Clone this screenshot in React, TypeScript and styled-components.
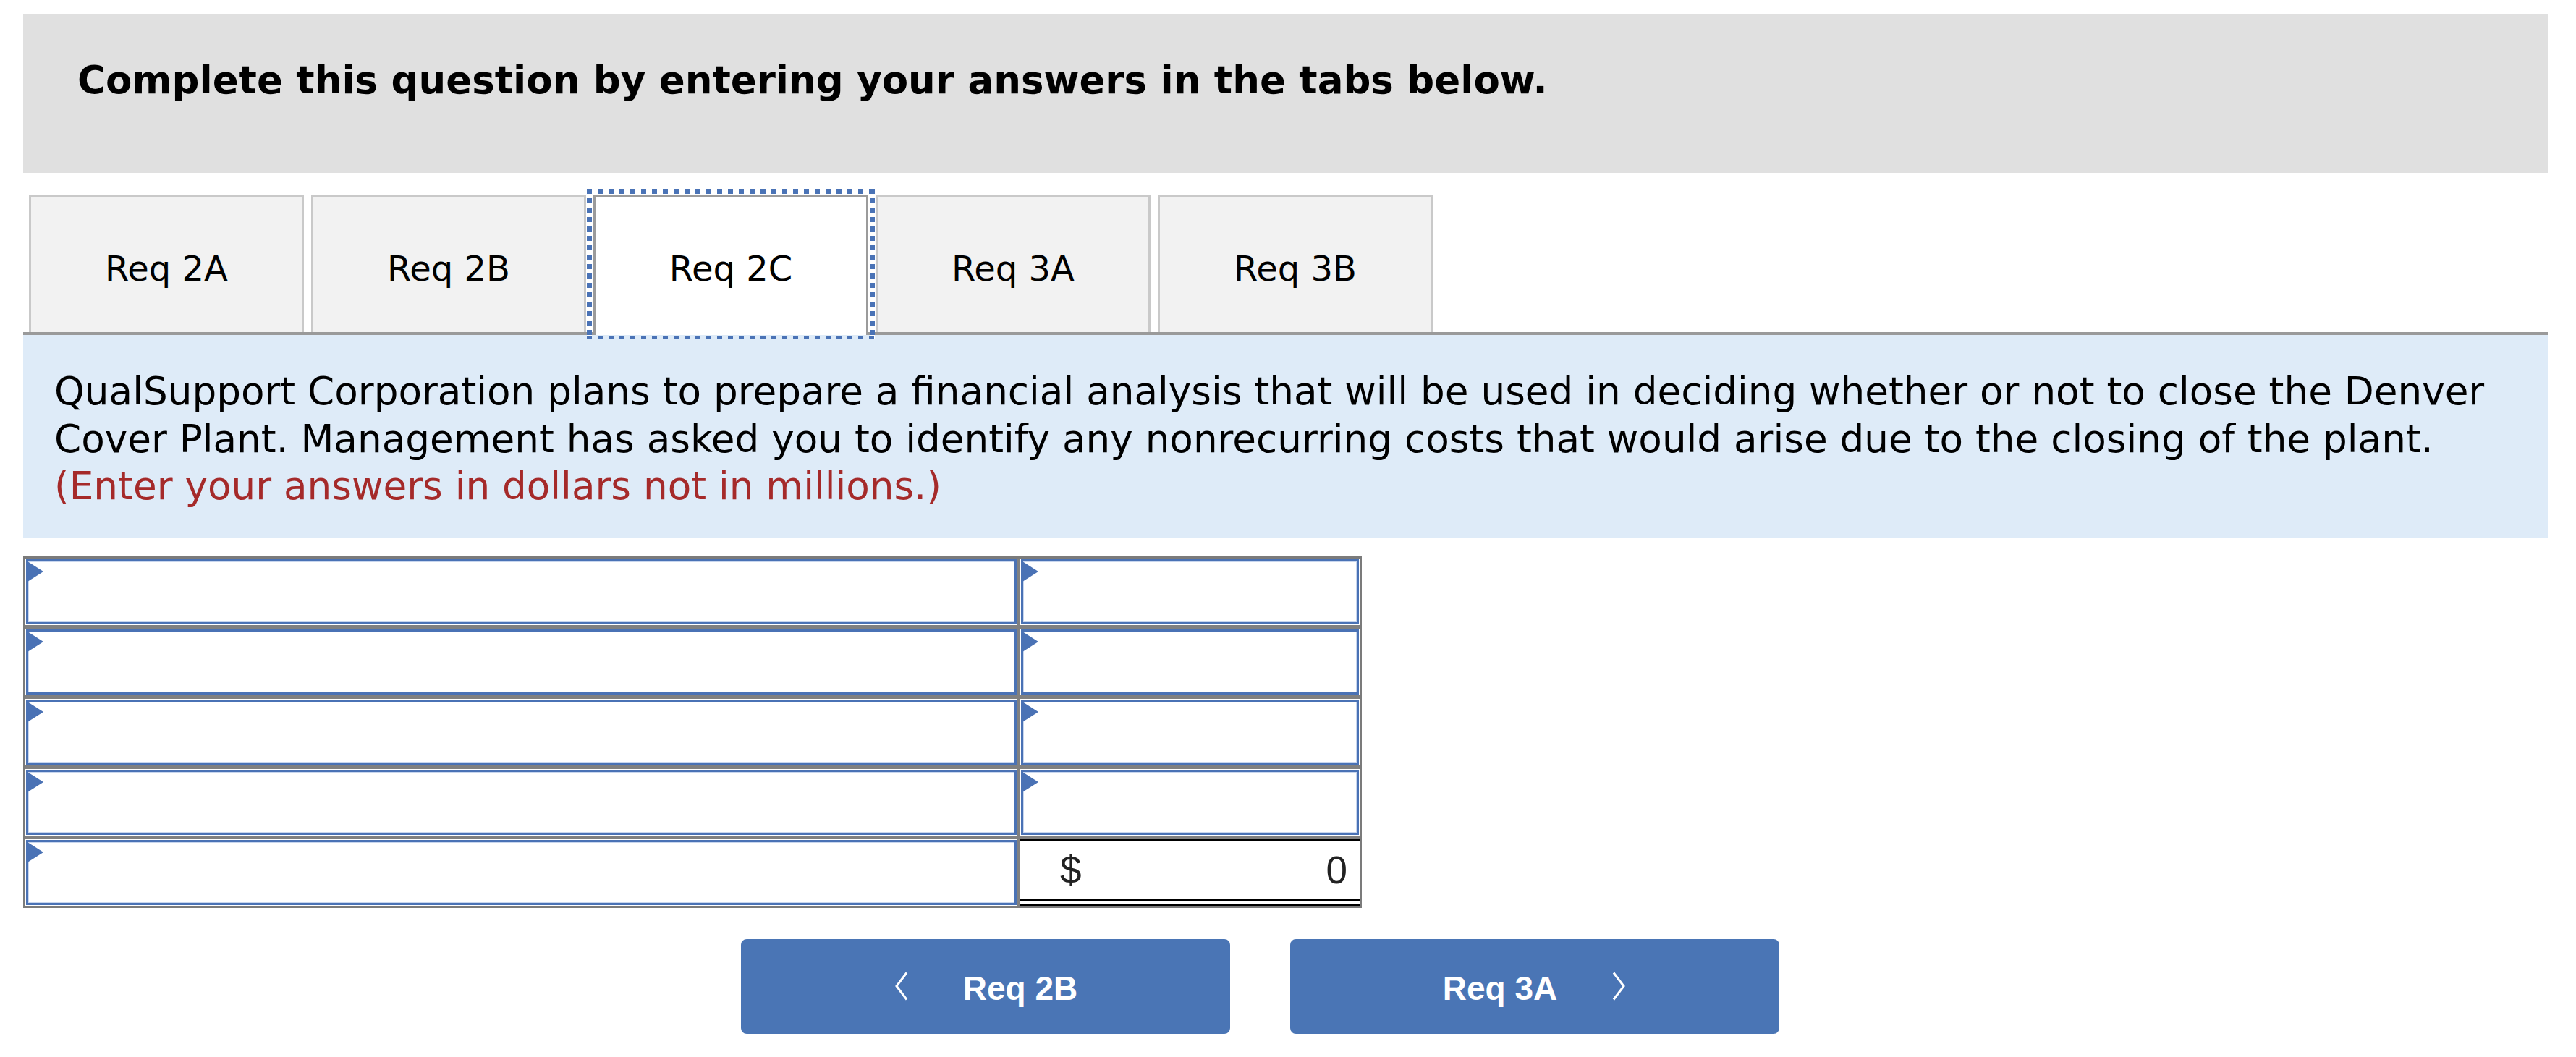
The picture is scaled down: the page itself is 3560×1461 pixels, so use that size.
import React from "react";
import styled, { createGlobalStyle } from "styled-components";

const GlobalStyle = createGlobalStyle`
  html, body { margin: 0; padding: 0; background: #ffffff; }
  body { font-family: "DejaVu Sans", Verdana, sans-serif; color: #000000; }
  * { box-sizing: border-box; }
`;

const Page = styled.div`
  width: 3560px;
  padding: 19px 39px 32px 32px;
`;

const Header = styled.div`
  height: 220px;
  background: #e0e0e0;
  padding: 61px 0 0 75px;
  font-size: 53px;
  font-weight: 700;
  line-height: normal;
`;

const TabRow = styled.div`
  margin-top: 30px;
  height: 194px;
  display: flex;
  align-items: flex-start;
  gap: 10px;
  padding-left: 8px;
  border-bottom: 4px solid #9a9a9a;
`;

const Tab = styled.button<{ $active?: boolean }>`
  position: relative;
  width: 380px;
  height: ${(p) => (p.$active ? "194px" : "190px")};
  margin: 0;
  padding: ${(p) => (p.$active ? "6px 0 0" : "10px 0 0")};
  border: 3px solid ${(p) => (p.$active ? "#9b9b9b" : "#c9c9c9")};
  border-bottom: none;
  background: ${(p) => (p.$active ? "#ffffff" : "#f2f2f2")};
  font-family: "DejaVu Sans", Verdana, sans-serif;
  font-size: 48px;
  line-height: normal;
  color: #000;
  text-align: center;
  cursor: pointer;
  z-index: ${(p) => (p.$active ? 2 : 0)};

  ${(p) =>
    p.$active &&
    `
    &::after {
      content: "";
      position: absolute;
      left: -12px;
      right: -12px;
      top: -11px;
      bottom: -6px;
      pointer-events: none;
      background:
        repeating-linear-gradient(90deg, #4a73b6 0 7px, transparent 7px 15px) left top / 100% 7px no-repeat,
        repeating-linear-gradient(90deg, #4a73b6 0 7px, transparent 7px 15px) left bottom / 100% 5px no-repeat,
        repeating-linear-gradient(180deg, #4a73b6 0 7px, #ffffff 7px 13px) left top / 7px 100% no-repeat,
        repeating-linear-gradient(180deg, #4a73b6 0 7px, #ffffff 7px 13px) right top / 7px 100% no-repeat;
    }
  `}
`;

const Panel = styled.div`
  background: #deebf8;
  padding: 46px 40px 38px 43px;
  font-size: 53.2px;
  line-height: 65.5px;
  color: #000;
  white-space: nowrap;
`;

const Note = styled.span`
  color: #a52a2a;
`;

const AnswerTable = styled.div`
  margin-top: 25px;
  width: 1850px;
  display: grid;
  grid-template-columns: 1371px 469px;
  column-gap: 4px;
  row-gap: 5px;
  border: 3px solid #7b7b7b;
  background: #808080;
`;

const Cell = styled.div`
  height: 92px;
  padding: 1px;
  background: #ffffff;
`;

const Field = styled.div`
  position: relative;
  height: 100%;
  border: 3px solid #4a72b5;
  box-shadow: inset 0 0 0 1px #c8d6ee;
  background: #ffffff;

  &::before {
    content: "";
    position: absolute;
    top: 0;
    left: -1px;
    width: 0;
    height: 0;
    border-left: 22px solid #4a72b5;
    border-top: 14px solid transparent;
    border-bottom: 14px solid transparent;
  }
`;

const FieldInput = styled.input`
  width: 100%;
  height: 100%;
  border: none;
  outline: none;
  background: transparent;
  padding: 0 16px 0 30px;
  font-family: "Liberation Sans", Arial, sans-serif;
  font-size: 48px;
  text-align: ${(p) => (p.type === "number" ? "right" : "left")};
`;

const TotalCell = styled.div`
  height: 92px;
  background: #ffffff;
  border-top: 3px solid #000000;
  border-bottom: 9px double #000000;
  display: flex;
  align-items: center;
  justify-content: space-between;
  padding: 0 17px 0 55px;
  font-family: "Liberation Sans", Arial, sans-serif;
  font-size: 53px;
  line-height: normal;
  color: #222222;
`;

const ButtonBar = styled.div`
  margin-top: 43px;
  padding-left: 992px;
  display: flex;
  gap: 83px;
`;

const NavButton = styled.button`
  width: 676px;
  height: 131px;
  margin: 0;
  padding: 6px 0 0;
  border: none;
  border-radius: 8px;
  background: #4a75b5;
  color: #ffffff;
  font-family: "Liberation Sans", Arial, sans-serif;
  font-weight: 700;
  font-size: 46px;
  line-height: normal;
  display: flex;
  align-items: center;
  justify-content: center;
  gap: 75px;
  cursor: pointer;
`;

const Chevron = ({ dir }: { dir: "left" | "right" }) => (
  <svg width="21" height="40" viewBox="0 0 21 40" style={{ marginTop: "-6px" }}>
    <path
      d={dir === "left" ? "M18 1.5 L4 20 L18 38.5" : "M3 1.5 L17 20 L3 38.5"}
      fill="none"
      stroke="#ffffff"
      strokeWidth="3"
      strokeLinejoin="miter"
    />
  </svg>
);

const tabs = ["Req 2A", "Req 2B", "Req 2C", "Req 3A", "Req 3B"];

export default function App() {
  return (
    <>
      <GlobalStyle />
      <Page>
        <Header>Complete this question by entering your answers in the tabs below.</Header>
        <TabRow>
          {tabs.map((t) => (
            <Tab key={t} $active={t === "Req 2C"}>
              {t}
            </Tab>
          ))}
        </TabRow>
        <Panel>
          QualSupport Corporation plans to prepare a financial analysis that will be used in deciding whether or not to close the Denver
          <br />
          Cover Plant. Management has asked you to identify any nonrecurring costs that would arise due to the closing of the plant.
          <br />
          <Note>(Enter your answers in dollars not in millions.)</Note>
        </Panel>
        <AnswerTable>
          {[0, 1, 2, 3].map((i) => (
            <React.Fragment key={i}>
              <Cell>
                <Field>
                  <FieldInput type="text" aria-label={`Cost item ${i + 1}`} />
                </Field>
              </Cell>
              <Cell>
                <Field>
                  <FieldInput type="number" aria-label={`Amount ${i + 1}`} />
                </Field>
              </Cell>
            </React.Fragment>
          ))}
          <Cell>
            <Field>
              <FieldInput type="text" aria-label="Total label" />
            </Field>
          </Cell>
          <TotalCell>
            <span>$</span>
            <span>0</span>
          </TotalCell>
        </AnswerTable>
        <ButtonBar>
          <NavButton>
            <Chevron dir="left" />
            <span>Req 2B</span>
          </NavButton>
          <NavButton>
            <span>Req 3A</span>
            <Chevron dir="right" />
          </NavButton>
        </ButtonBar>
      </Page>
    </>
  );
}
